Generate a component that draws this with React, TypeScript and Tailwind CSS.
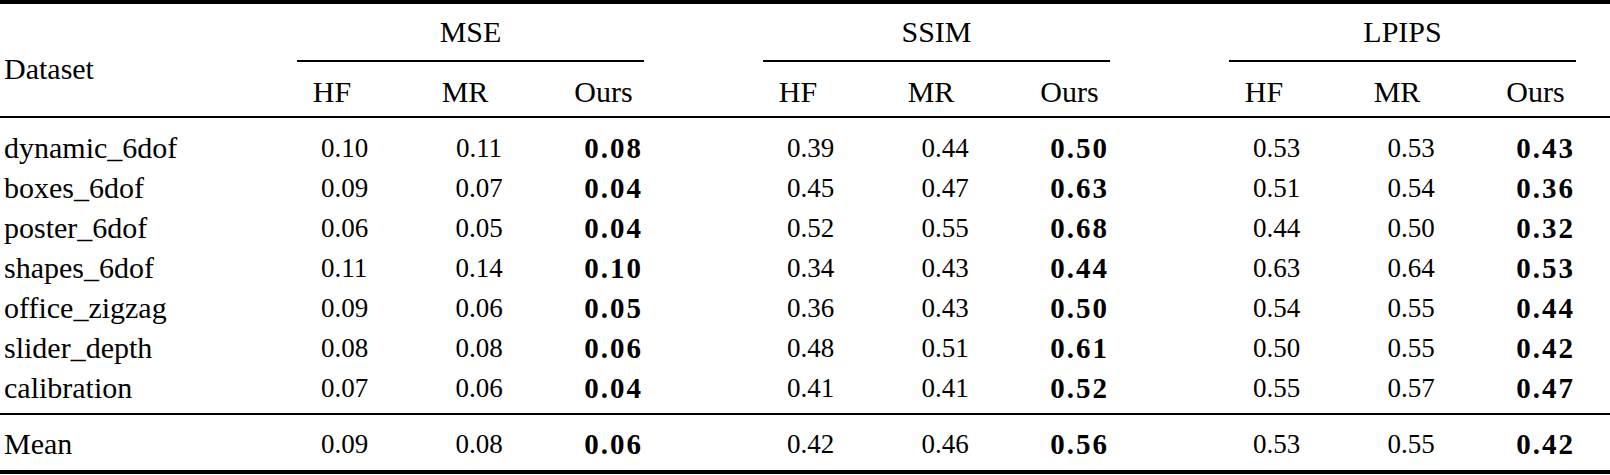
import React, { FC } from "react";

type Group = { name: string; key: "mse" | "ssim" | "lpips" };

interface Row {
  dataset: string;
  mse: [string, string, string];
  ssim: [string, string, string];
  lpips: [string, string, string];
}

const groups: Group[] = [
  { name: "MSE", key: "mse" },
  { name: "SSIM", key: "ssim" },
  { name: "LPIPS", key: "lpips" },
];

const rows: Row[] = [
  { dataset: "dynamic_6dof", mse: ["0.10", "0.11", "0.08"], ssim: ["0.39", "0.44", "0.50"], lpips: ["0.53", "0.53", "0.43"] },
  { dataset: "boxes_6dof", mse: ["0.09", "0.07", "0.04"], ssim: ["0.45", "0.47", "0.63"], lpips: ["0.51", "0.54", "0.36"] },
  { dataset: "poster_6dof", mse: ["0.06", "0.05", "0.04"], ssim: ["0.52", "0.55", "0.68"], lpips: ["0.44", "0.50", "0.32"] },
  { dataset: "shapes_6dof", mse: ["0.11", "0.14", "0.10"], ssim: ["0.34", "0.43", "0.44"], lpips: ["0.63", "0.64", "0.53"] },
  { dataset: "office_zigzag", mse: ["0.09", "0.06", "0.05"], ssim: ["0.36", "0.43", "0.50"], lpips: ["0.54", "0.55", "0.44"] },
  { dataset: "slider_depth", mse: ["0.08", "0.08", "0.06"], ssim: ["0.48", "0.51", "0.61"], lpips: ["0.50", "0.55", "0.42"] },
  { dataset: "calibration", mse: ["0.07", "0.06", "0.04"], ssim: ["0.41", "0.41", "0.52"], lpips: ["0.55", "0.57", "0.47"] },
];

const mean: Row = {
  dataset: "Mean",
  mse: ["0.09", "0.08", "0.06"],
  ssim: ["0.42", "0.46", "0.56"],
  lpips: ["0.53", "0.55", "0.42"],
};

const serif = "font-['Liberation_Serif','DejaVu_Serif',serif]";

// group spacing: each block is 347px, 119px apart
const groupClass = (i: number) => (i === 0 ? "w-[347px]" : "w-[347px] ml-[119px]");

const Cells: FC<{ values: [string, string, string] }> = ({ values }) => (
  <div className="grid grid-cols-[70px_196px_81px] items-center">
    <span className={`${serif} text-center pl-[24px] text-[27px]`}>{values[0]}</span>
    <span className={`${serif} text-center pl-[28px] text-[27px]`}>{values[1]}</span>
    <span className={`${serif} text-center pl-[20px] text-[29px] font-bold tracking-[2px]`}>{values[2]}</span>
  </div>
);

const DataRow: FC<{ row: Row; className?: string }> = ({ row, className }) => (
  <div className={`flex items-center ${className ?? "h-[40px]"}`}>
    <div className={`${serif} w-[297px] pl-[4px] text-[30px]`}>{row.dataset}</div>
    {groups.map((g, i) => (
      <div key={g.key} className={groupClass(i)}>
        <Cells values={row[g.key]} />
      </div>
    ))}
  </div>
);

const App: FC = () => {
  return (
    <div className={`${serif} w-[1610px] h-[475px] bg-white text-black leading-none`}>
      <div className="h-[4px] bg-black" />

      {/* header */}
      <div className="flex">
        <div className={`${serif} w-[297px] h-[112px] pl-[4px] pt-[18px] flex items-center text-[30px]`}>Dataset</div>
        {groups.map((g, i) => (
          <div key={g.key} className={groupClass(i)}>
            <div className={`${serif} h-[56px] flex items-center justify-center text-[30px]`}>{g.name}</div>
            <div className="h-[2px] bg-black" />
            <div className="h-[54px] pt-[6px] grid grid-cols-[70px_196px_81px] items-center text-[30px]">
              <span className={`${serif} text-center`}>HF</span>
              <span className={`${serif} text-center`}>MR</span>
              <span className={`${serif} text-center`}>Ours</span>
            </div>
          </div>
        ))}
      </div>

      <div className="h-[2px] bg-black" />

      <div className="pt-[10px] pb-[5px]">
        {rows.map((r) => (
          <DataRow key={r.dataset} row={r} />
        ))}
      </div>

      <div className="h-[2px] bg-black" />

      <DataRow row={mean} className="h-[55px] pt-[3px]" />

      <div className="h-[4px] bg-black" />
    </div>
  );
};

export default App;
